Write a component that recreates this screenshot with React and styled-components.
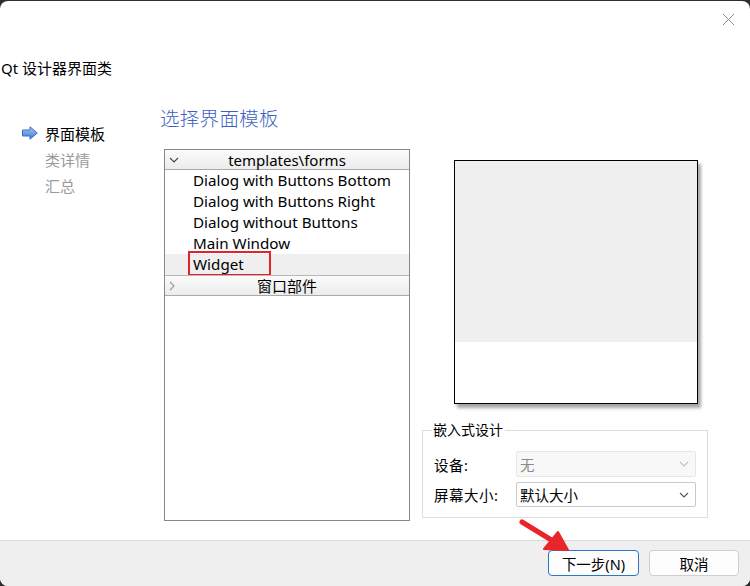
import React from "react";
import styled, { createGlobalStyle } from "styled-components";

const Global = createGlobalStyle`
  html, body { margin: 0; padding: 0; background: #2d2d2d; }
  body { width: 750px; height: 586px; overflow: hidden; }
  * { box-sizing: border-box; }
`;

const FONT = `"Noto Sans", "Noto Sans CJK SC", sans-serif`;

const Window = styled.div`
  position: relative;
  margin-top: 1px;
  width: 750px;
  height: 585px;
  background: #fff;
  border-radius: 8px;
  overflow: hidden;
  display: flex;
  flex-direction: column;
  font-family: ${FONT};
  color: #000;
`;

const TitleBar = styled.div`
  height: 36px;
  display: flex;
  justify-content: flex-end;
  align-items: center;
  padding-right: 14px;
`;

const CloseBtn = styled.div`
  width: 16px;
  height: 16px;
  display: flex;
  align-items: center;
  justify-content: center;
`;

const DialogTitle = styled.div`
  height: 62px;
  padding-left: 1px;
  padding-top: 21px;
  font-size: 15px;
  line-height: 20px;
`;

const Body = styled.div`
  flex: 1;
  display: flex;
`;

const Sidebar = styled.div`
  width: 160px;
  padding-top: 21px;
  padding-left: 22px;
  display: flex;
  flex-direction: column;
`;

const NavItem = styled.div`
  height: 26px;
  display: flex;
  align-items: center;
  font-size: 15px;
  color: ${(p) => (p.$active ? "#000" : "#9a9a9a")};
  padding-left: ${(p) => (p.$active ? "0" : "23px")};
  gap: 7px;
`;

const Main = styled.div`
  flex: 1;
  display: flex;
  flex-direction: column;
  padding-top: 6px;
`;

const PageTitle = styled.div`
  font-size: 19.5px;
  line-height: 28px;
  color: #3f5fc4;
  font-weight: 300;
  letter-spacing: 0.3px;
`;

const Content = styled.div`
  display: flex;
  margin-top: 16px;
  padding-left: 4px;
`;

const Tree = styled.div`
  width: 246px;
  height: 372px;
  border: 1px solid #838790;
  background: #fff;
  display: flex;
  flex-direction: column;
`;

const GroupHeader = styled.div`
  height: ${(p) => (p.$first ? "20px" : "21px")};
  display: flex;
  align-items: center;
  justify-content: center;
  position: relative;
  font-size: 15px;
  background: linear-gradient(#fbfbfb, #ececec);
  border-bottom: 1px solid #a9a9a9;
  border-top: ${(p) => (p.$first ? "none" : "1px solid #b8b8b8")};
`;

const Chevron = styled.span`
  position: absolute;
  left: 4px;
  top: 50%;
  transform: translateY(-50%);
  display: flex;
`;

const Item = styled.div`
  position: relative;
  height: 21px;
  line-height: 21px;
  padding-left: 28px;
  font-size: 15.2px;
  white-space: nowrap;
  background: ${(p) => (p.$selected ? "#efefef" : "transparent")};
`;

const Highlight = styled.div`
  position: absolute;
  left: 23px;
  top: -3px;
  width: 83px;
  height: 25px;
  border: 2px solid #e3232b;
`;

const Right = styled.div`
  display: flex;
  flex-direction: column;
  margin-left: 12px;
  width: 286px;
`;

const PreviewWrap = styled.div`
  padding-top: 11px;
  padding-left: 32px;
`;

const Preview = styled.div`
  width: 244px;
  height: 244px;
  border: 1.5px solid #000;
  background: linear-gradient(#efefef 0, #efefef 181px, #fff 181px);
  box-shadow: 3px 4px 3px rgba(0, 0, 0, 0.35);
`;

const GroupBox = styled.fieldset`
  margin: 18px 0 0 0;
  padding: 13px 11px 10px 11px;
  width: 286px;
  height: 96px;
  border: 1px solid #dcdcdc;
  display: flex;
  flex-direction: column;
  gap: 5px;
  font-size: 14px;
`;

const Legend = styled.legend`
  padding: 0 2px 0 1px;
  margin-left: -2px;
  font-size: 14px;
  line-height: 16px;
`;

const FieldRow = styled.div`
  display: flex;
  align-items: center;
`;

const Label = styled.div`
  width: 82px;
  font-size: 14.5px;
  letter-spacing: 0.5px;
`;

const Combo = styled.div`
  width: 180px;
  height: ${(p) => (p.$disabled ? "26px" : "25px")};
  display: flex;
  align-items: center;
  justify-content: space-between;
  padding: 0 6px 0 3px;
  border: 1px solid ${(p) => (p.$disabled ? "#e6e6e6" : "#c9c9c9")};
  border-radius: 2px;
  background: ${(p) => (p.$disabled ? "#f8f8f8" : "#fff")};
  color: ${(p) => (p.$disabled ? "#8a8a8a" : "#000")};
  font-size: 14.5px;
`;

const Footer = styled.div`
  height: 46px;
  background: #efefef;
  border-top: 1px solid #dcdcdc;
  display: flex;
  justify-content: flex-end;
  align-items: flex-start;
  padding-top: 9px;
  padding-right: 11px;
  gap: 10px;
`;

const Button = styled.button`
  width: ${(p) => (p.$wide ? "91px" : "90px")};
  height: 26px;
  background: #fdfdfd;
  border: 1px solid ${(p) => (p.$default ? "#2c74cc" : "#cfcfcf")};
  border-radius: 4px;
  font-family: ${FONT};
  font-size: 14.5px;
  color: #000;
  padding: 0;
  display: flex;
  align-items: center;
  justify-content: center;
`;

const Annotation = styled.svg`
  position: absolute;
  left: 515px;
  top: 512px;
  pointer-events: none;
`;

const ChevDown = ({ color = "#555" }) => (
  <svg width="10" height="6" viewBox="0 0 10 6">
    <path d="M1 1 L5 5 L9 1" fill="none" stroke={color} strokeWidth="1.1" />
  </svg>
);

const ChevRight = () => (
  <svg width="6" height="10" viewBox="0 0 6 10">
    <path d="M1 1 L5 5 L1 9" fill="none" stroke="#9a9a9a" strokeWidth="1.1" />
  </svg>
);

const NavArrow = () => (
  <svg width="16" height="14" viewBox="0 0 16 14">
    <defs>
      <linearGradient id="ag" x1="0" y1="0" x2="0" y2="1">
        <stop offset="0" stopColor="#a9c8f5" />
        <stop offset="1" stopColor="#3d78d8" />
      </linearGradient>
    </defs>
    <path
      d="M0.5 4 H8 V0.8 L15.3 7 L8 13.2 V10 H0.5 Z"
      fill="url(#ag)"
      stroke="#3a6fc6"
      strokeWidth="1"
      strokeLinejoin="round"
    />
  </svg>
);

const items = [
  "Dialog with Buttons Bottom",
  "Dialog with Buttons Right",
  "Dialog without Buttons",
  "Main Window",
];

export default function App() {
  return (
    <>
      <Global />
      <Window>
        <TitleBar>
          <CloseBtn>
            <svg width="13" height="13" viewBox="0 0 13 13">
              <path d="M1 1 L12 12 M12 1 L1 12" stroke="#8a8a8a" strokeWidth="1" />
            </svg>
          </CloseBtn>
        </TitleBar>
        <DialogTitle>Qt 设计器界面类</DialogTitle>
        <Body>
          <Sidebar>
            <NavItem $active>
              <NavArrow />
              界面模板
            </NavItem>
            <NavItem>类详情</NavItem>
            <NavItem>汇总</NavItem>
          </Sidebar>
          <Main>
            <PageTitle>选择界面模板</PageTitle>
            <Content>
              <Tree>
                <GroupHeader $first>
                  <Chevron>
                    <ChevDown color="#444" />
                  </Chevron>
                  templates\forms
                </GroupHeader>
                {items.map((t) => (
                  <Item key={t}>{t}</Item>
                ))}
                <Item $selected>
                  Widget
                  <Highlight />
                </Item>
                <GroupHeader>
                  <Chevron>
                    <ChevRight />
                  </Chevron>
                  窗口部件
                </GroupHeader>
              </Tree>
              <Right>
                <PreviewWrap>
                  <Preview />
                </PreviewWrap>
                <GroupBox>
                  <Legend>嵌入式设计</Legend>
                  <FieldRow>
                    <Label>设备:</Label>
                    <Combo $disabled>
                      无
                      <ChevDown color="#c4c4c4" />
                    </Combo>
                  </FieldRow>
                  <FieldRow>
                    <Label>屏幕大小:</Label>
                    <Combo>
                      默认大小
                      <ChevDown color="#555" />
                    </Combo>
                  </FieldRow>
                </GroupBox>
              </Right>
            </Content>
          </Main>
        </Body>
        <Footer>
          <Button $default $wide>下一步(N)</Button>
          <Button>取消</Button>
        </Footer>
        <Annotation width="60" height="42" viewBox="0 0 60 42">
          <path d="M7 9 L38 28" stroke="#e8262a" strokeWidth="5" strokeLinecap="round" />
          <path d="M53 37 L29 36 L43 19 Z" fill="#e8262a" stroke="#e8262a" strokeWidth="2" strokeLinejoin="round" />
        </Annotation>
      </Window>
    </>
  );
}
